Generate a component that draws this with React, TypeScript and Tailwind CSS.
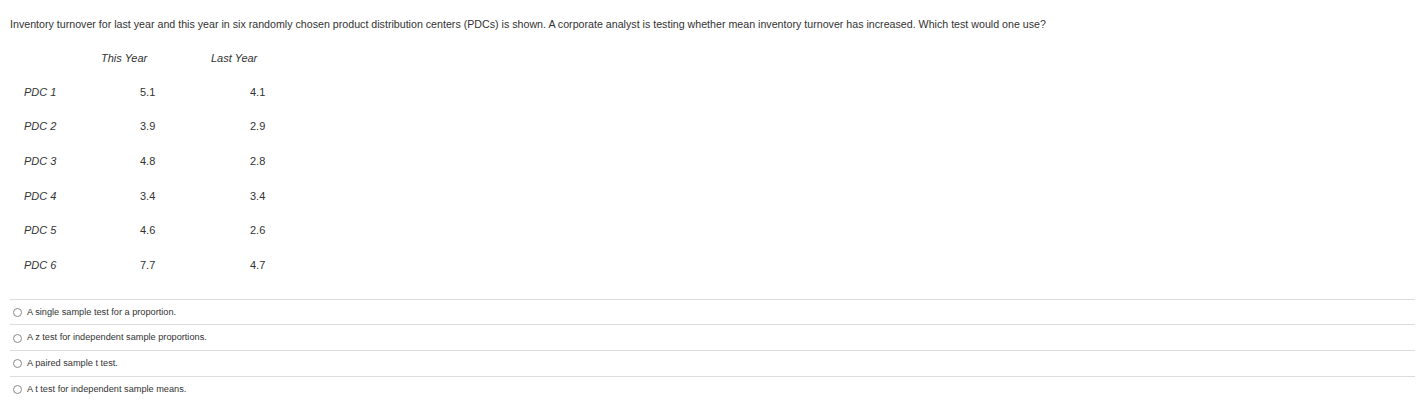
import React from "react";

const rows = [
  { name: "PDC 1", thisYear: "5.1", lastYear: "4.1" },
  { name: "PDC 2", thisYear: "3.9", lastYear: "2.9" },
  { name: "PDC 3", thisYear: "4.8", lastYear: "2.8" },
  { name: "PDC 4", thisYear: "3.4", lastYear: "3.4" },
  { name: "PDC 5", thisYear: "4.6", lastYear: "2.6" },
  { name: "PDC 6", thisYear: "7.7", lastYear: "4.7" },
];

const options = [
  "A single sample test for a proportion.",
  "A z test for independent sample proportions.",
  "A paired sample t test.",
  "A t test for independent sample means.",
];

export default function App() {
  return (
    <div
      className="w-[1424px] h-[410px] bg-white text-[#333333] px-[10px] pt-[17px]"
      style={{ fontFamily: '"Liberation Sans", Arial, sans-serif' }}
    >
      <p className="text-[10.67px] leading-[14px]">
        Inventory turnover for last year and this year in six randomly chosen
        product distribution centers (PDCs) is shown. A corporate analyst is
        testing whether mean inventory turnover has increased. Which test would
        one use?
      </p>

      <div className="mt-[10px] text-[11px] leading-[13px]">
        <div className="flex h-[34px] items-center italic">
          <div className="w-[91px]" />
          <div className="w-[110px]">This Year</div>
          <div className="w-[110px]">Last Year</div>
        </div>
        {rows.map((r) => (
          <div key={r.name} className="flex h-[34.6px] items-center">
            <div className="w-[91px] pl-[14px] italic">{r.name}</div>
            <div className="w-[110px] pl-[39px]">{r.thisYear}</div>
            <div className="w-[110px] pl-[39px]">{r.lastYear}</div>
          </div>
        ))}
      </div>

      <div className="mt-[16px] w-[1405px]">
        {options.map((o) => (
          <label
            key={o}
            className="flex h-[25.7px] items-center gap-[5px] border-t border-[#dcdcdc] pl-[3px] pt-[1px] text-[9.2px]"
          >
            <span className="inline-block h-[9px] w-[9px] rounded-full border border-[#8a8a8a] bg-white" />
            <span>{o}</span>
          </label>
        ))}
      </div>
    </div>
  );
}
